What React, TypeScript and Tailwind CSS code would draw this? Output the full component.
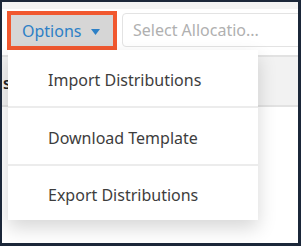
import React from "react";

const menuItems = ["Import Distributions", "Download Template", "Export Distributions"];

const App = () => {
  return (
    <div
      className="w-[301px] h-[246px] overflow-hidden bg-white border-l-2 border-t-2 border-r-[3px] border-b-[3px] border-[#1b2739]"
      style={{ fontFamily: '"Noto Sans", "Open Sans", sans-serif' }}
    >
      <div className="relative w-full h-full">
        {/* toolbar */}
        <div className="h-[7px] bg-[#f3f3f3]" />
        <div className="flex items-start pl-[5px] pt-[2px] gap-[5px] h-[44px]">
          <div className="w-[110px] h-[39px] shrink-0 border-[4px] border-[#f1582f] bg-[#d6d6d6] flex items-center pl-[11px]">
            <span className="text-[16px] text-[#2d80c6] leading-none">Options</span>
            <svg width="9" height="6" viewBox="0 0 9 6" className="ml-[10px] mt-[2px]">
              <path d="M0 0h9L4.5 6z" fill="#2d80c6" />
            </svg>
          </div>
          <div className="mt-[2px] w-[200px] h-[34px] shrink-0 rounded-[4px] border border-[#e3e3e3] flex items-center pl-[10px]">
            <span className="text-[16px] text-[#b0b0b0] leading-none">Select Allocatio...</span>
          </div>
        </div>

        {/* table header behind menu */}
        <div className="mt-[2px] h-[52px] bg-[#f2f2f2] border-t-2 border-b-2 border-[#e2e2e2] flex items-center pt-[3px]">
          <span className="ml-[1px] text-[16px] font-semibold text-[#222]">s</span>
        </div>

        {/* dropdown */}
        <div className="absolute left-[6px] top-[48px] w-[250px] bg-white shadow-[0_8px_18px_rgba(0,0,0,0.16)]">
          {menuItems.map((label, i) => (
            <div
              key={label}
              className={`flex items-center pl-[40px] pt-[3px] text-[16px] text-[#3d3d3d] ${
                i < menuItems.length - 1 ? "h-[58px] border-b-2 border-[#ececec]" : "h-[54px]"
              }`}
            >
              {label}
            </div>
          ))}
        </div>
      </div>
    </div>
  );
};

export default App;
